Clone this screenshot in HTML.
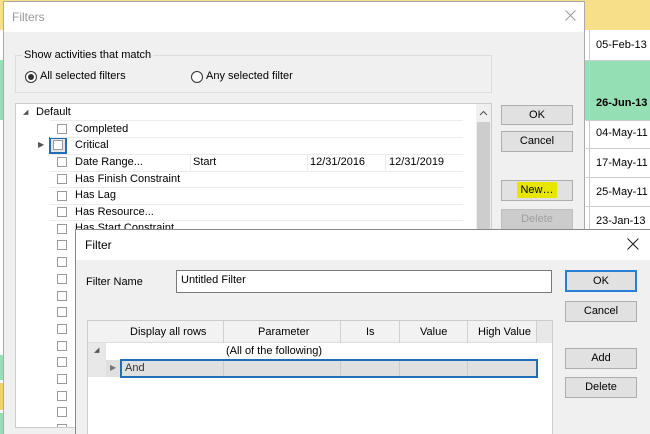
<!DOCTYPE html>
<html><head><style>
*{box-sizing:border-box;margin:0;padding:0}
html,body{width:650px;height:434px;overflow:hidden}
body{background:#fff;font-family:"Liberation Sans",sans-serif;font-size:11px;color:#000;position:relative}
.a{position:absolute}
.btn{position:absolute;background:#e1e1e1;border:1px solid #adadad;text-align:center;line-height:18px;font-size:11px}
.cb{position:absolute;width:10px;height:10px;border:1px solid #9a9a9a;background:#fff}
.t{position:absolute;white-space:nowrap}
.hl{position:absolute;height:1px;background:#ececec}
</style></head><body>
<div class="a" style="left:0;top:0;width:650px;height:30px;background:#f7df8a"></div>
<div class="a" style="left:0;top:60px;width:650px;height:60px;background:#94e0b4"></div>
<div class="a" style="left:0;top:355px;width:4px;height:25px;background:#94e0b4"></div>
<div class="a" style="left:0;top:383px;width:4px;height:27px;background:#f0d070"></div>
<div class="a" style="left:0;top:413px;width:4px;height:21px;background:#94e0b4"></div>
<div class="a" style="left:589px;top:30px;width:61px;height:404px;border-left:1px solid #ccc"></div>
<div class="t" style="left:596px;top:39px">05-Feb-13</div>
<div class="t" style="left:596px;top:97px;font-weight:bold">26-Jun-13</div>
<div class="hl" style="left:586px;top:60px;width:64px;background:#ccc"></div>
<div class="hl" style="left:586px;top:120px;width:64px;background:#ccc"></div>
<div class="t" style="left:596px;top:127px">04-May-11</div>
<div class="hl" style="left:586px;top:148px;width:64px;background:#ccc"></div>
<div class="t" style="left:596px;top:157px">17-May-11</div>
<div class="hl" style="left:586px;top:177px;width:64px;background:#ccc"></div>
<div class="t" style="left:596px;top:186px">25-May-11</div>
<div class="hl" style="left:586px;top:206px;width:64px;background:#ccc"></div>
<div class="t" style="left:596px;top:215px">23-Jan-13</div>

<div class="a" style="left:3px;top:1px;width:582px;height:433px;background:#f0f0f0;border:1px solid #aaa;border-bottom:none"></div>
<div class="a" style="left:4px;top:2px;width:580px;height:30px;background:#fff"></div>
<div class="t" style="left:12px;top:10px;color:#999;font-size:12px">Filters</div>
<svg class="a" style="left:565px;top:10px" width="11" height="11"><path d="M0.5 0.5L10.5 10.5M10.5 0.5L0.5 10.5" stroke="#999" stroke-width="1"/></svg>
<div class="a" style="left:15px;top:55px;width:477px;height:38px;border:1px solid #dcdcdc"></div>
<div class="t" style="left:22px;top:49px;background:#f0f0f0;padding:0 2px">Show activities that match</div>
<div class="a" style="left:25px;top:71px;width:12px;height:12px;border-radius:50%;border:1px solid #333;background:#fff"></div>
<div class="a" style="left:28px;top:74px;width:6px;height:6px;border-radius:50%;background:#333"></div>
<div class="t" style="left:40px;top:70px">All selected filters</div>
<div class="a" style="left:191px;top:71px;width:12px;height:12px;border-radius:50%;border:1px solid #333;background:#fff"></div>
<div class="t" style="left:206px;top:70px">Any selected filter</div>
<div class="a" style="left:15px;top:103px;width:477px;height:325px;background:#fff;border:1px solid #ccc"></div>
<div class="t" style="left:23px;top:108px;font-size:7px;color:#555">◢</div>
<div class="t" style="left:36px;top:106px">Default</div>
<div class="a" style="left:476px;top:104px;width:15px;height:323px;background:#f0f0f0"></div>
<div class="a" style="left:477px;top:122px;width:13px;height:305px;background:#cdcdcd"></div>
<svg class="a" style="left:479px;top:110px" width="9" height="6"><path d="M1 5L4.5 1.5L8 5" stroke="#555" fill="none"/></svg>
<div class="cb" style="left:57px;top:124px"></div><div class="t" style="left:75px;top:123px">Completed</div>
<div class="a" style="left:49px;top:137px;width:18px;height:17px;border:2px solid #1f6fb8;background:#e5e5e5"></div>
<div class="cb" style="left:53px;top:140px"></div>
<div class="t" style="left:38px;top:140px;font-size:8px;color:#555">▶</div>
<div class="t" style="left:75px;top:139px">Critical</div>
<div class="cb" style="left:57px;top:157px"></div><div class="t" style="left:75px;top:156px">Date Range...</div>
<div class="t" style="left:193px;top:156px">Start</div><div class="t" style="left:310px;top:156px">12/31/2016</div><div class="t" style="left:389px;top:156px">12/31/2019</div>
<div class="a" style="left:190px;top:154px;width:1px;height:17px;background:#ececec"></div>
<div class="a" style="left:307px;top:154px;width:1px;height:17px;background:#ececec"></div>
<div class="a" style="left:385px;top:154px;width:1px;height:17px;background:#ececec"></div>
<div class="cb" style="left:57px;top:174px"></div><div class="t" style="left:75px;top:173px">Has Finish Constraint</div>
<div class="cb" style="left:57px;top:191px"></div><div class="t" style="left:75px;top:189px">Has Lag</div>
<div class="cb" style="left:57px;top:207px"></div><div class="t" style="left:75px;top:206px">Has Resource...</div>
<div class="cb" style="left:57px;top:224px"></div><div class="t" style="left:75px;top:222px">Has Start Constraint</div>
<div class="hl" style="left:50px;top:120px;width:413px"></div>
<div class="hl" style="left:50px;top:137px;width:413px"></div>
<div class="hl" style="left:50px;top:154px;width:413px"></div>
<div class="hl" style="left:50px;top:171px;width:413px"></div>
<div class="hl" style="left:50px;top:187px;width:413px"></div>
<div class="hl" style="left:50px;top:204px;width:413px"></div>
<div class="hl" style="left:50px;top:220px;width:413px"></div>
<div class="cb" style="left:57px;top:240px"></div>
<div class="cb" style="left:57px;top:257px"></div>
<div class="cb" style="left:57px;top:274px"></div>
<div class="cb" style="left:57px;top:291px"></div>
<div class="cb" style="left:57px;top:307px"></div>
<div class="cb" style="left:57px;top:324px"></div>
<div class="cb" style="left:57px;top:341px"></div>
<div class="cb" style="left:57px;top:357px"></div>
<div class="cb" style="left:57px;top:374px"></div>
<div class="cb" style="left:57px;top:391px"></div>
<div class="cb" style="left:57px;top:407px"></div>
<div class="a" style="left:57px;top:424px;width:10px;height:3px;border:1px solid #9a9a9a;border-bottom:none"></div>
<div class="btn" style="left:501px;top:105px;width:72px;height:20px">OK</div>
<div class="btn" style="left:501px;top:131px;width:72px;height:21px">Cancel</div>
<div class="btn" style="left:501px;top:180px;width:72px;height:21px"><span style="background:#e6e600;padding:2px 3px">New…</span></div>
<div class="btn" style="left:501px;top:209px;width:72px;height:21px;color:#a0a0a0;background:#ccc;border-color:#bfbfbf">Delete</div>

<div class="a" style="left:75px;top:229px;width:575px;height:205px;background:#f0f0f0;border:1px solid #888;border-right:none;border-bottom:none"></div>
<div class="a" style="left:76px;top:230px;width:574px;height:30px;background:#fff"></div>
<div class="t" style="left:85px;top:238px;font-size:12px">Filter</div>
<svg class="a" style="left:627px;top:238px" width="12" height="12"><path d="M0.5 0.5L11.5 11.5M11.5 0.5L0.5 11.5" stroke="#222" stroke-width="1"/></svg>
<div class="t" style="left:86px;top:276px">Filter Name</div>
<div class="a" style="left:176px;top:270px;width:376px;height:23px;background:#fff;border:1px solid #7a7a7a"></div>
<div class="t" style="left:181px;top:274px">Untitled Filter</div>
<div class="btn" style="left:565px;top:270px;width:72px;height:22px;border:2px solid #2a7fd4;line-height:18px">OK</div>
<div class="btn" style="left:565px;top:301px;width:72px;height:21px">Cancel</div>
<div class="btn" style="left:565px;top:348px;width:72px;height:21px">Add</div>
<div class="btn" style="left:565px;top:377px;width:72px;height:21px">Delete</div>
<div class="a" style="left:87px;top:320px;width:466px;height:114px;background:#fff;border:1px solid #ccc;border-bottom:none"></div>
<div class="a" style="left:88px;top:321px;width:464px;height:22px;background:#e8e8e8"></div>
<div class="a" style="left:88px;top:321px;width:449px;height:22px;background:#f2f2f2;border-bottom:1px solid #ddd"></div>
<div class="a" style="left:223px;top:321px;width:1px;height:22px;background:#d0d0d0"></div>
<div class="a" style="left:340px;top:321px;width:1px;height:22px;background:#d0d0d0"></div>
<div class="a" style="left:399px;top:321px;width:1px;height:22px;background:#d0d0d0"></div>
<div class="a" style="left:467px;top:321px;width:1px;height:22px;background:#d0d0d0"></div>
<div class="a" style="left:536px;top:321px;width:1px;height:22px;background:#d0d0d0"></div>
<div class="t" style="left:130px;top:326px">Display all rows</div>
<div class="t" style="left:258px;top:326px">Parameter</div>
<div class="t" style="left:366px;top:326px">Is</div>
<div class="t" style="left:420px;top:326px">Value</div>
<div class="t" style="left:478px;top:326px">High Value</div>
<div class="a" style="left:88px;top:343px;width:18px;height:34px;background:#e8e8e8"></div>
<div class="a" style="left:106px;top:360px;width:431px;height:17px;background:#e0e0e0"></div>
<div class="t" style="left:94px;top:346px;font-size:7px;color:#555">◢</div>
<div class="t" style="left:226px;top:345px">(All of the following)</div>
<div class="t" style="left:110px;top:363px;font-size:8px;color:#777">▶</div>
<div class="a" style="left:120px;top:359px;width:418px;height:19px;border:2px solid #1f6fb8"></div>
<div class="a" style="left:223px;top:361px;width:1px;height:15px;background:#ccc"></div>
<div class="a" style="left:340px;top:361px;width:1px;height:15px;background:#ccc"></div>
<div class="a" style="left:399px;top:361px;width:1px;height:15px;background:#ccc"></div>
<div class="a" style="left:467px;top:361px;width:1px;height:15px;background:#ccc"></div>
<div class="t" style="left:125px;top:362px;color:#333">And</div>
</body></html>
